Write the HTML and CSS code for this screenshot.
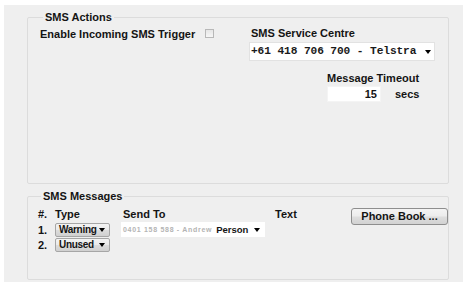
FILE: index.html
```html
<!DOCTYPE html>
<html>
<head>
<meta charset="utf-8">
<link rel="stylesheet" href="styles.css">
</head>
<body>
<div class="window">
  <fieldset class="group group-actions">
    <legend>SMS Actions</legend>
    <div class="actions-row">
      <div class="trigger">
        <span class="label">Enable Incoming SMS Trigger</span>
        <span class="checkbox"></span>
      </div>
      <div class="service">
        <div class="label service-label">SMS Service Centre</div>
        <div class="combo combo-mono">
          <span>+61 418 706 700 - Telstra</span>
          <svg class="arrow" width="6" height="4" viewBox="0 0 6 4"><path d="M0 0h6L3 4z"/></svg>
        </div>
        <div class="timeout">
          <div class="label">Message Timeout</div>
          <div class="timeout-row">
            <div class="textbox">15</div>
            <span class="label secs">secs</span>
          </div>
        </div>
      </div>
    </div>
  </fieldset>
  <fieldset class="group group-messages">
    <legend>SMS Messages</legend>
    <button class="btn phonebook">Phone Book ...</button>
    <div class="msgs">
      <div class="hdr">#.</div>
      <div class="hdr">Type</div>
      <div class="hdr sendto-hdr">Send To</div>
      <div class="hdr">Text</div>

      <div class="num">1.</div>
      <div class="btn-combo"><span>Warning</span><svg class="arrow" width="6" height="4" viewBox="0 0 6 4"><path d="M0 0h6L3 4z"/></svg></div>
      <div class="combo combo-send"><span class="blur">0401 158 588 - Andrew</span><span class="person">Person</span><svg class="arrow" width="6" height="4" viewBox="0 0 6 4"><path d="M0 0h6L3 4z"/></svg></div>
      <div></div>

      <div class="num">2.</div>
      <div class="btn-combo"><span>Unused</span><svg class="arrow" width="6" height="4" viewBox="0 0 6 4"><path d="M0 0h6L3 4z"/></svg></div>
      <div></div>
      <div></div>
    </div>
  </fieldset>
</div>
</body>
</html>
```

FILE: styles.css
```css
* { box-sizing: border-box; }

body {
  margin: 0;
  background: #ffffff;
  font-family: "Liberation Sans", Arial, sans-serif;
  font-size: 11px;
  font-weight: bold;
  color: #141414;
  line-height: 13px;
}

.window {
  margin: 5px 0 0 4px;
  width: 459px;
  height: 277px;
  background: #efefef;
  padding: 6px 0 0 23px;
}

.group {
  margin: 0;
  width: 422px;
  border: 1px solid #dcdcdc;
  border-radius: 2px;
  padding: 3px 12px 0 12px;
  min-inline-size: 0;
  position: relative;
}

.group legend {
  padding: 0 2px;
  margin-left: 3px;
  line-height: 13px;
}

.group-actions { height: 173px; }
.group-messages { height: 90px; margin-top: 6px; padding: 5px 10px 0 10px; }

.actions-row {
  display: flex;
  align-items: flex-start;
}

.trigger {
  display: flex;
  align-items: flex-start;
  margin-top: 1px;
}

.checkbox {
  width: 9px;
  height: 9px;
  margin: 1px 0 0 10px;
  border: 1px solid #b8b8b8;
  background: linear-gradient(#e6e6e6, #f6f6f6);
}

.service {
  margin-left: auto;
  margin-right: 1px;
  width: 186px;
  display: flex;
  flex-direction: column;
}

.service-label { padding-left: 2px; }

.combo {
  background: #ffffff;
  border: 1px solid #e2e2e2;
  display: flex;
  align-items: center;
  white-space: nowrap;
}

.combo .arrow {
  margin-left: auto;
  flex-shrink: 0;
}

.combo-mono {
  margin-top: 2px;
  height: 19px;
  padding: 0 3px 0 1px;
  font-family: "Liberation Mono", "Courier New", monospace;
  font-size: 11.2px;
  font-weight: bold;
  color: #1a1a1a;
  letter-spacing: -0.1px;
}

.timeout {
  margin: 11px 0 0 78px;
  display: flex;
  flex-direction: column;
}

.timeout-row {
  margin-top: 1px;
  display: flex;
  align-items: center;
}

.textbox {
  width: 54px;
  height: 16px;
  background: #ffffff;
  border: 1px solid #f4f4f4;
  text-align: right;
  padding-right: 3px;
  line-height: 14px;
}

.secs { margin-left: 14px; }

.phonebook {
  position: absolute;
  top: 5px;
  right: 0;
}

.btn {
  width: 97px;
  height: 17px;
  padding: 0;
  font-family: "Liberation Sans", Arial, sans-serif;
  font-size: 11px;
  font-weight: bold;
  color: #141414;
  line-height: 15px;
  border: 1px solid #8e8e8e;
  border-radius: 3px;
  background: linear-gradient(#f4f4f4, #ececec 48%, #dedede 52%, #d2d2d2);
}

.msgs {
  display: grid;
  grid-template-columns: 17px 66px 154px auto;
  grid-template-rows: 15px 15px 15px;
}

.hdr { line-height: 13px; }
.sendto-hdr { padding-left: 2px; }

.num { line-height: 14px; }

.btn-combo {
  width: 55px;
  height: 14px;
  border: 1px solid #a6a6a6;
  border-radius: 2px;
  background: linear-gradient(#f3f3f3, #eaeaea 48%, #dcdcdc 52%, #d0d0d0);
  display: flex;
  align-items: center;
  padding: 0 4px 0 3px;
  line-height: 12px;
  font-size: 10px;
  letter-spacing: -0.3px;
  white-space: nowrap;
}

.btn-combo .arrow { margin-left: auto; flex-shrink: 0; }

.combo-send {
  width: 144px;
  height: 15px;
  margin-top: -1px;
  border-color: #ffffff;
  padding: 0 4px 0 1px;
  font-size: 9.5px;
}

.blur {
  color: #b4b4b4;
  font-size: 7px;
  letter-spacing: 0.7px;
}

.person { margin-left: 4px; }
```
